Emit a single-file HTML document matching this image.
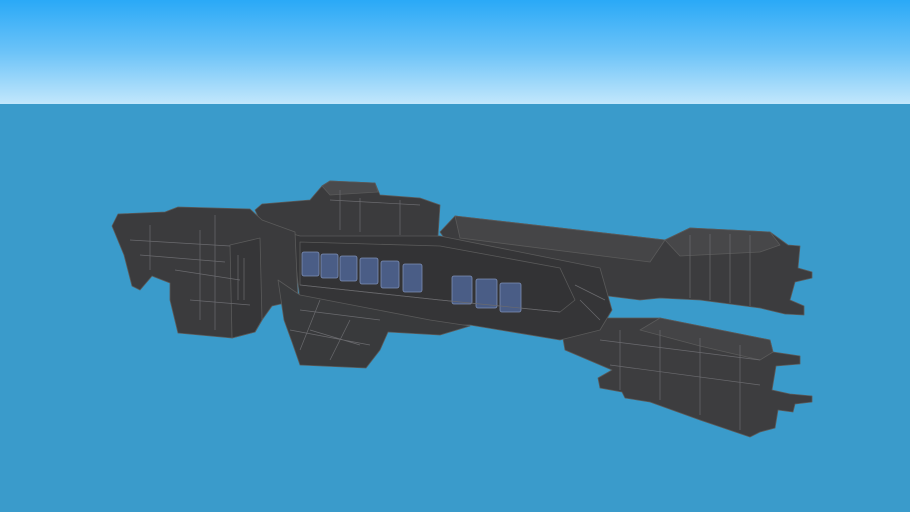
<!DOCTYPE html>
<html><head><meta charset="utf-8"><style>
html,body{margin:0;padding:0;width:910px;height:512px;overflow:hidden}
svg{display:block}
</style></head><body>
<svg width="910" height="512" viewBox="0 0 910 512" xmlns="http://www.w3.org/2000/svg">
<defs>
<linearGradient id="sky" x1="0" y1="0" x2="0" y2="1">
<stop offset="0" stop-color="#2aa9f7"/><stop offset="0.5" stop-color="#6cc3f8"/><stop offset="1" stop-color="#c2e7fc"/>
</linearGradient>
</defs>
<rect x="0" y="0" width="910" height="104" fill="url(#sky)"/>
<rect x="0" y="104" width="910" height="408" fill="#3a9bcb"/>
<g stroke="#5a5a5a" stroke-width="0.8" stroke-linejoin="round">
<polygon points="560,322 600,318 660,318 770,340 773,352 800,356 800,364 776,366 772,390 790,394 812,396 812,402 795,404 793,412 778,410 775,428 760,432 750,437 700,420 650,402 625,398 622,392 600,388 598,378 612,370 565,350" fill="#3d3d3f"/>
<polygon points="640,330 660,318 770,340 773,352 760,360 700,346" fill="#444446"/>
<polygon points="440,232 455,216 665,240 690,228 770,232 788,245 800,246 798,268 812,272 812,278 795,282 790,300 804,306 804,315 785,314 760,308 700,300 660,298 640,300 600,295 460,260" fill="#3c3c3e"/>
<polygon points="455,216 665,240 650,262 460,238" fill="#454547"/>
<polygon points="665,240 690,228 770,232 780,245 760,252 680,256" fill="#474749"/>
<polygon points="292,232 440,236 600,268 612,310 600,330 560,340 470,325 430,325 300,300" fill="#353537"/>
<polygon points="300,242 440,246 560,268 575,300 560,312 440,300 300,285" fill="#333335"/>
<polygon points="255,210 262,204 310,200 322,186 330,181 375,183 380,195 420,198 440,205 438,236 300,236 262,225" fill="#3b3b3d"/>
<polygon points="322,186 330,181 375,183 378,192 330,195" fill="#4a4a4c"/>
<polygon points="112,226 118,214 165,212 178,207 250,209 262,220 295,232 298,300 272,306 262,320 255,332 232,338 178,333 170,300 170,283 152,276 140,290 132,286 124,255" fill="#3b3b3d"/>
<polygon points="230,245 260,238 262,320 255,332 232,338" fill="#363638"/>
<polygon points="278,280 300,295 430,320 470,326 440,335 388,332 380,350 366,368 300,365 292,342 284,320" fill="#393a3c"/>
</g>
<g fill="#4a5d86" stroke="#7d8eb5" stroke-width="0.8">
<rect x="302" y="252" width="17" height="24" rx="2"/>
<rect x="321" y="254" width="17" height="24" rx="2"/>
<rect x="340" y="256" width="17" height="25" rx="2"/>
<rect x="360" y="258" width="18" height="26" rx="2"/>
<rect x="381" y="261" width="18" height="27" rx="2"/>
<rect x="403" y="264" width="19" height="28" rx="2"/>
<rect x="452" y="276" width="20" height="28" rx="2"/>
<rect x="476" y="279" width="21" height="29" rx="2"/>
<rect x="500" y="283" width="21" height="29" rx="2"/>
</g>
<g stroke="#6a6a6e" stroke-width="0.7" fill="none">
<path d="M130 240 L230 246 M140 255 L225 262 M175 270 L240 280 M190 300 L250 305 M238 255 L238 300 M244 258 L244 300 M150 225 L150 270 M200 230 L200 320 M215 215 L215 330"/>
<path d="M300 310 L380 320 M310 330 L360 345 M320 300 L300 350 M350 320 L330 360 M290 330 L370 345"/>
<path d="M600 340 L760 360 M610 365 L760 385 M660 330 L660 400 M700 338 L700 415 M740 345 L740 430 M620 330 L620 390"/>
<path d="M690 235 L690 298 M710 234 L710 300 M730 234 L730 303 M750 235 L750 306"/>
<path d="M330 200 L420 205 M340 190 L340 230 M400 200 L400 235 M360 198 L360 232"/>
<path d="M440 300 L560 312 M300 285 L440 300 M575 285 L605 300 M580 300 L600 320"/>
</g>
</svg>
</body></html>
